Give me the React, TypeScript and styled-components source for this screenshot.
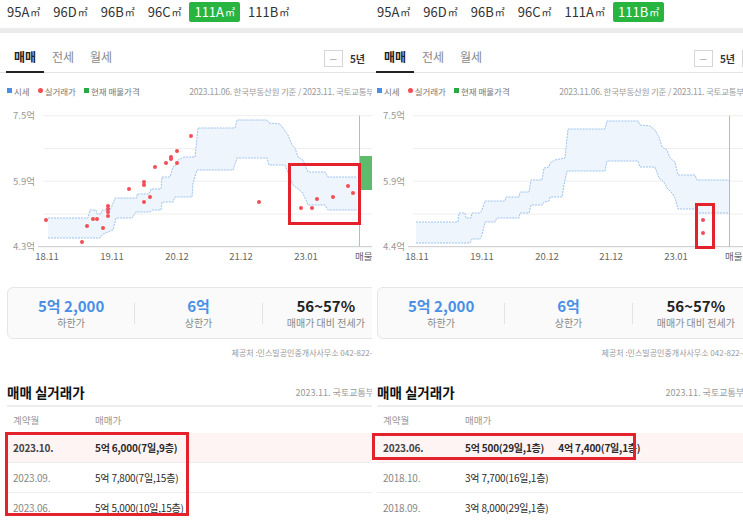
import styled, { createGlobalStyle } from 'styled-components'

type Pt = [number, number]

interface IDeal {
  month: string
  prices: string[]
}

interface IMark {
  x: number
  y: number
  w: number
  h: number
}

interface IPanel {
  width: number
  shift: number
  activeSize: string
  yLabels: string[]
  upper: Pt[]
  lower: Pt[]
  dots: Pt[]
  listingBar: boolean
  deals: IDeal[]
  marks: IMark[]
}

const SIZES = ['95A', '96D', '96B', '96C', '111A', '111B']
const GRID_Y = [10.7, 43.5, 76.2, 109, 141.7]
const X_LABELS: [string, number][] = [
  ['18.11', 47],
  ['19.11', 112],
  ['20.12', 177],
  ['21.12', 241],
  ['23.01', 306],
]

const panels: IPanel[] = [
  {
    width: 372,
    shift: 0,
    activeSize: '111A',
    yLabels: ['7.5억', '5.9억', '4.3억'],
    upper: [
      [48, 113], [88, 113], [90, 105], [96, 105], [97, 109], [101, 109], [102, 105], [110, 105],
      [112, 101], [115, 93], [137, 93], [137, 89], [149, 89], [151, 84], [161, 84], [162, 72],
      [170, 72], [173, 62], [176, 60], [178, 55], [184, 52], [195, 52], [198, 23], [235, 23],
      [237, 15], [267, 15], [269, 18], [280, 19], [283, 23], [288, 30], [292, 40], [295, 43],
      [298, 52], [303, 55], [308, 67], [325, 67], [328, 72], [357, 72],
    ],
    lower: [
      [48, 133], [100, 133], [103, 129], [113, 125], [116, 113], [132, 113], [136, 107], [150, 107],
      [152, 105], [161, 105], [162, 97], [173, 97], [175, 92], [192, 92], [193, 78], [197, 65],
      [233, 65], [237, 53], [267, 53], [269, 60], [285, 60], [290, 73], [293, 80], [302, 87],
      [306, 95], [308, 100], [325, 100], [328, 105], [357, 105],
    ],
    dots: [
      [46, 115], [82, 137], [87, 121], [93, 114], [97, 114], [103, 123], [108, 101], [108, 104],
      [108, 107], [108, 111], [129, 84], [144, 77], [144, 80], [144, 97], [150, 92], [155, 62],
      [166, 58], [171, 52], [171, 54], [177, 46], [177, 58], [191, 31], [259, 97], [301, 103],
      [312, 103], [317, 94], [333, 92], [348, 81], [353, 88],
    ],
    listingBar: true,
    deals: [
      { month: '2023.10.', prices: ['5억 6,000(7일,9층)'] },
      { month: '2023.09.', prices: ['5억 7,800(7일,15층)'] },
      { month: '2023.06.', prices: ['5억 5,000(10일,15층)'] },
    ],
    marks: [
      { x: 288, y: 163, w: 73, h: 62 },
      { x: 5, y: 432, w: 184, h: 84 },
    ],
  },
  {
    width: 371,
    shift: 2,
    activeSize: '111B',
    yLabels: ['7.5억', '5.9억', '4.4억'],
    upper: [
      [46, 117], [88, 117], [89, 108], [95, 108], [96, 113], [101, 113], [102, 108], [110, 108],
      [112, 105], [115, 96], [135, 96], [136, 92], [149, 92], [150, 87], [159, 87], [161, 75],
      [172, 75], [174, 63], [179, 62], [180, 58], [185, 55], [195, 53], [198, 24], [235, 24],
      [237, 16], [268, 16], [270, 20], [280, 21], [285, 25], [289, 32], [292, 42], [297, 45],
      [300, 53], [305, 57], [308, 70], [325, 70], [327, 75], [359, 75],
    ],
    lower: [
      [46, 138], [100, 138], [102, 134], [110, 134], [112, 130], [115, 117], [125, 117], [127, 113],
      [149, 113], [150, 108], [159, 108], [161, 100], [172, 100], [174, 97], [179, 96], [180, 92],
      [192, 92], [194, 80], [197, 66], [235, 66], [237, 56], [268, 56], [270, 62], [285, 62],
      [289, 73], [294, 77], [297, 83], [302, 88], [305, 93], [308, 104], [325, 104], [328, 108],
      [359, 108],
    ],
    dots: [
      [333, 115],
      [333, 128],
    ],
    listingBar: false,
    deals: [
      { month: '2023.06.', prices: ['5억 500(29일,1층)', '4억 7,400(7일,1층)'] },
      { month: '2018.10.', prices: ['3억 7,700(16일,1층)'] },
      { month: '2018.09.', prices: ['3억 8,000(29일,1층)'] },
    ],
    marks: [
      { x: 325, y: 203, w: 20, h: 46 },
      { x: 2, y: 433, w: 264, h: 27 },
    ],
  },
]

const toPoints = (pts: Pt[]) => pts.map(([x, y]) => `${x},${y}`).join(' ')

function PriceChart({ panel }: { panel: IPanel }) {
  const band = toPoints([...panel.upper, ...[...panel.lower].reverse()])

  return (
    <ChartSvg width={397} height={160} viewBox="0 0 397 160">
      {GRID_Y.slice(0, 4).map((y) => (
        <line key={y} x1={43} x2={397} y1={y} y2={y} stroke="#eeeeee" />
      ))}
      <line x1={38} x2={397} y1={141.7} y2={141.7} stroke="#c8c8c8" />
      {panel.yLabels.map((label, i) => (
        <text key={label} x={35} y={GRID_Y[i * 2] + 3.5} textAnchor="end" className="axis-y">
          {label}
        </text>
      ))}
      {X_LABELS.map(([label, x]) => (
        <text key={label} x={x} y={155} textAnchor="middle" className="axis-x">
          {label}
        </text>
      ))}
      <text x={355} y={155} className="axis-x">매물</text>
      <polygon points={band} fill="#eef5fd" />
      <polyline points={toPoints(panel.upper)} fill="none" stroke="#9ec3ef" strokeDasharray="2 1" />
      <polyline points={toPoints(panel.lower)} fill="none" stroke="#9ec3ef" strokeDasharray="2 1" />
      <line x1={359.5} x2={359.5} y1={10.7} y2={141.7} stroke="#93d49d" />
      {panel.listingBar && <rect x={360} y={51} width={16} height={34} fill="#5dbb6b" />}
      {panel.dots.map(([x, y], i) => (
        <circle key={i} cx={x} cy={y} r={2} fill="#f24e55" />
      ))}
    </ChartSvg>
  )
}

function PricePanel({ panel }: { panel: IPanel }) {
  return (
    <Panel $width={panel.width}>
      <Page $shift={panel.shift}>
        <SizeBar>
          {SIZES.map((size) => (
            <SizeChip key={size} $active={size === panel.activeSize}>
              {size}
              <Unit>㎡</Unit>
            </SizeChip>
          ))}
        </SizeBar>
        <Band />
        <TabBar>
          <Tab $active>매매</Tab>
          <Tab>전세</Tab>
          <Tab>월세</Tab>
          <Controls>
            <StepButton>—</StepButton>
            <Period>5년</Period>
            <StepButton>+</StepButton>
          </Controls>
        </TabBar>
        <Legend>
          <LegendItem>
            <Swatch $color="#4a8fe6" />
            시세
          </LegendItem>
          <LegendItem>
            <Swatch $color="#f24e55" $round />
            실거래가
          </LegendItem>
          <LegendItem>
            <Swatch $color="#2aa845" />
            현재 매물가격
          </LegendItem>
          <LegendSource>2023.11.06. 한국부동산원 기준 / 2023.11. 국토교통부</LegendSource>
        </Legend>
        <PriceChart panel={panel} />
        <StatCard>
          <Stat>
            <StatValue $tone="#4a8fe6">5억 2,000</StatValue>
            <StatLabel>하한가</StatLabel>
          </Stat>
          <StatDivider />
          <Stat>
            <StatValue $tone="#4a8fe6">6억</StatValue>
            <StatLabel>상한가</StatLabel>
          </Stat>
          <StatDivider />
          <Stat>
            <StatValue $tone="#222222">56~57%</StatValue>
            <StatLabel>매매가 대비 전세가</StatLabel>
          </Stat>
        </StatCard>
        <Provider>제공처 :인스빌공인중개사사무소 042-822-4</Provider>
        <TableHead>
          <TableTitle>매매 실거래가</TableTitle>
          <TableSource>2023.11. 국토교통부</TableSource>
        </TableHead>
        <HeaderRow>
          <MonthCell>계약월</MonthCell>
          <span>매매가</span>
        </HeaderRow>
        {panel.deals.map((deal, index) => (
          <DealRow key={deal.month} $hl={index === 0}>
            <MonthCell>{deal.month}</MonthCell>
            <Prices>
              {deal.prices.map((price) => (
                <span key={price}>{price}</span>
              ))}
            </Prices>
          </DealRow>
        ))}
        {panel.marks.map((mark) => (
          <Mark key={`${mark.x}-${mark.y}`} $x={mark.x} $y={mark.y} $w={mark.w} $h={mark.h} />
        ))}
      </Page>
    </Panel>
  )
}

export default function App() {
  return (
    <>
      <GlobalStyle />
      <Screen>
        {panels.map((panel) => (
          <PricePanel key={panel.activeSize} panel={panel} />
        ))}
      </Screen>
    </>
  )
}

const GlobalStyle = createGlobalStyle`
  html, body {
    margin: 0;
    padding: 0;
    background: #ffffff;
  }

  body {
    font-family: 'Noto Sans CJK KR', 'Noto Sans', sans-serif;
    overflow: hidden;
  }

  * {
    box-sizing: border-box;
  }
`

const Screen = styled.div`
  display: flex;
  flex-direction: row;
  height: 520px;
  overflow: hidden;
  width: 743px;
`

const Panel = styled.section<{ $width: number }>`
  flex: none;
  height: 520px;
  overflow: hidden;
  width: ${({ $width }) => $width}px;
`

const Page = styled.div<{ $shift: number }>`
  margin-left: ${({ $shift }) => -$shift}px;
  position: relative;
  width: 397px;
`

const SizeBar = styled.div`
  align-items: center;
  display: flex;
  gap: 3px;
  height: 28px;
  padding: 2px 0 6px 2px;
`

const SizeChip = styled.div<{ $active?: boolean }>`
  align-items: center;
  background: ${({ $active }) => ($active ? '#27b53f' : 'transparent')};
  border-radius: 2px;
  color: ${({ $active }) => ($active ? '#ffffff' : '#333333')};
  display: flex;
  font-size: 13px;
  height: 20px;
  line-height: 20px;
  padding: 0 5px;
`

const Unit = styled.span`
  font-size: 10px;
  margin-left: 1px;
`

const Band = styled.div`
  background: #ebebeb;
  height: 5px;
`

const TabBar = styled.div`
  align-items: flex-end;
  border-bottom: 1px solid #e4e4e4;
  display: flex;
  height: 40px;
  padding: 0 6px;
`

const Tab = styled.div<{ $active?: boolean }>`
  border-bottom: 2px solid ${({ $active }) => ($active ? '#222222' : 'transparent')};
  color: ${({ $active }) => ($active ? '#222222' : '#888888')};
  font-size: 12px;
  font-weight: ${({ $active }) => ($active ? 700 : 400)};
  line-height: 20px;
  margin-bottom: -1px;
  padding-bottom: 4px;
  text-align: center;
  width: 38px;
`

const Controls = styled.div`
  align-items: center;
  display: flex;
  gap: 7px;
  margin: 0 0 5px auto;
`

const StepButton = styled.div`
  align-items: center;
  background: #ffffff;
  border: 1px solid #d6d6d6;
  color: #777777;
  display: flex;
  font-size: 8px;
  height: 17px;
  justify-content: center;
  width: 19px;
`

const Period = styled.span`
  color: #333333;
  font-size: 10px;
  font-weight: 700;
`

const Legend = styled.div`
  align-items: center;
  color: #777777;
  display: flex;
  font-size: 8.5px;
  gap: 8px;
  height: 13px;
  margin-top: 11px;
  padding: 0 23px 0 7px;
  white-space: nowrap;
`

const LegendItem = styled.span`
  align-items: center;
  display: flex;
  gap: 2px;
`

const Swatch = styled.i<{ $color: string; $round?: boolean }>`
  background: ${({ $color }) => $color};
  border-radius: ${({ $round }) => ($round ? '50%' : '0')};
  display: block;
  height: 5px;
  width: 5px;
`

const LegendSource = styled.span`
  color: #9a9a9a;
  letter-spacing: -0.2px;
  margin-left: auto;
`

const ChartSvg = styled.svg`
  display: block;
  margin-top: 8px;

  .axis-y {
    fill: #999999;
    font-size: 9.5px;
  }

  .axis-x {
    fill: #666666;
    font-size: 9.5px;
  }
`

const StatCard = styled.div`
  align-items: center;
  background: #fafafa;
  border: 1px solid #e6e6e6;
  border-radius: 6px;
  display: flex;
  height: 52px;
  margin: 22px 7px 0;
`

const Stat = styled.div`
  align-items: center;
  display: flex;
  flex: 1;
  flex-direction: column;
`

const StatValue = styled.span<{ $tone: string }>`
  color: ${({ $tone }) => $tone};
  font-size: 15px;
  font-weight: 700;
  line-height: 18px;
`

const StatLabel = styled.span`
  color: #888888;
  font-size: 10px;
  line-height: 15px;
`

const StatDivider = styled.div`
  background: #e3e3e3;
  height: 21px;
  width: 1px;
`

const Provider = styled.div`
  color: #999999;
  font-size: 8px;
  line-height: 12px;
  margin-top: 8px;
  padding: 0 20px 0 7px;
  text-align: right;
  white-space: nowrap;
`

const TableHead = styled.div`
  align-items: center;
  border-bottom: 2px solid #eeeeee;
  display: flex;
  height: 24px;
  justify-content: space-between;
  margin: 24px 7px 0;
  padding-bottom: 4px;
`

const TableTitle = styled.h3`
  color: #111111;
  font-size: 13.5px;
  font-weight: 700;
  line-height: 18px;
  margin: 0;
`

const TableSource = styled.span`
  color: #999999;
  font-size: 9px;
  margin-right: 16px;
`

const HeaderRow = styled.div`
  align-items: center;
  color: #999999;
  display: flex;
  font-size: 9.5px;
  height: 26px;
  margin: 0 7px;
  padding-left: 6px;
`

const MonthCell = styled.span`
  flex: none;
  width: 82px;
`

const DealRow = styled.div<{ $hl?: boolean }>`
  align-items: center;
  background: ${({ $hl }) => ($hl ? '#fff4f4' : '#ffffff')};
  border-bottom: 1px solid #eeeeee;
  color: ${({ $hl }) => ($hl ? '#444444' : '#888888')};
  display: flex;
  font-size: 10px;
  font-weight: ${({ $hl }) => ($hl ? 700 : 400)};
  height: 30px;
  letter-spacing: -0.2px;
  margin: 0 7px;
  padding-left: 6px;
`

const Prices = styled.div`
  color: #2a2a2a;
  display: flex;
  gap: 14px;
  white-space: nowrap;
`

const Mark = styled.div<{ $x: number; $y: number; $w: number; $h: number }>`
  border: 3.5px solid #e4222b;
  height: ${({ $h }) => $h}px;
  left: ${({ $x }) => $x}px;
  pointer-events: none;
  position: absolute;
  top: ${({ $y }) => $y}px;
  width: ${({ $w }) => $w}px;
`
